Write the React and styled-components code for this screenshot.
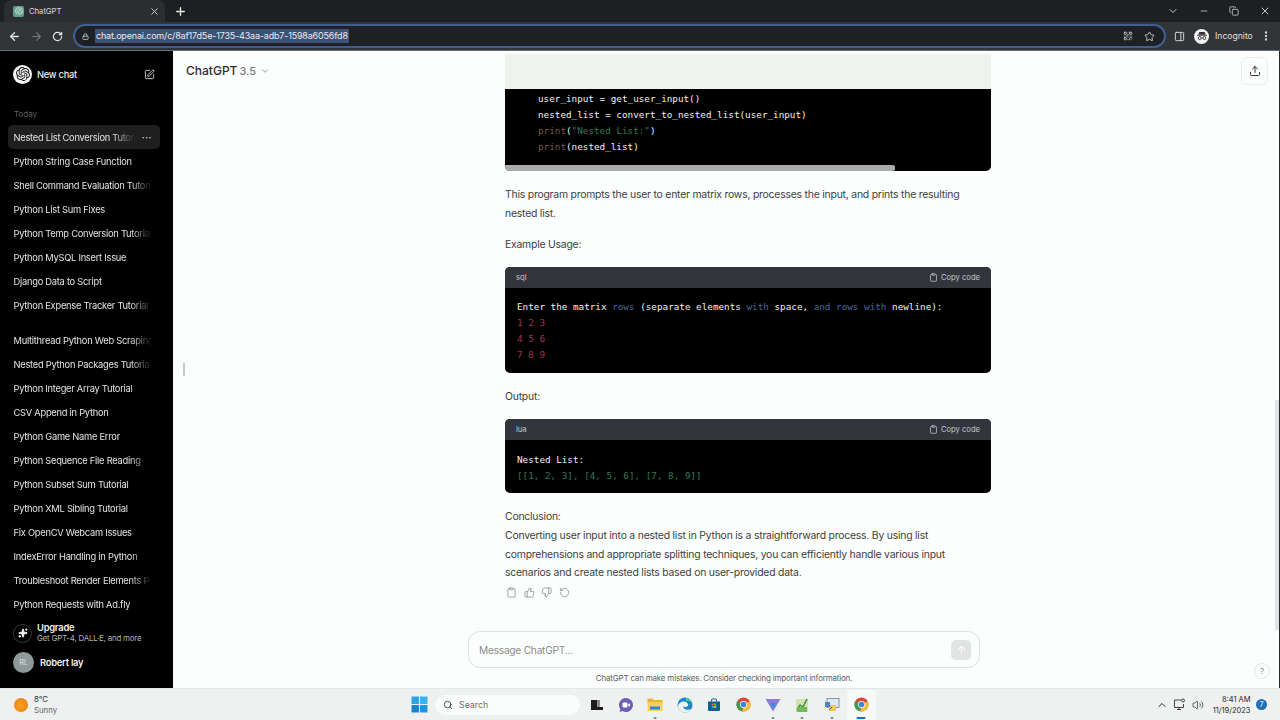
import React from "react";
import styled, { createGlobalStyle } from "styled-components";
import {
  ArrowLeft,
  ArrowRight,
  ArrowUp,
  ChevronDown,
  ChevronUp,
  Clipboard,
  Copy,
  EllipsisVertical,
  Lock,
  Minus,
  PanelRight,
  Plus,
  QrCode,
  RotateCcw,
  RotateCw,
  Search,
  Sparkles,
  SquarePen,
  Star,
  ThumbsDown,
  ThumbsUp,
  Upload,
  Volume2,
  X,
} from "lucide-react";
import { SiOpenai } from "react-icons/si";

const GlobalStyle = createGlobalStyle`
  html, body {
    margin: 0;
    padding: 0;
    width: 1280px;
    height: 720px;
    overflow: hidden;
    font-family: Inter, "Liberation Sans", sans-serif;
  }
  * { box-sizing: border-box; }
`;

const Page = styled.div`
  width: 1280px;
  height: 720px;
  display: flex;
  flex-direction: column;
  overflow: hidden;
`;

/* browser chrome */
const TabStrip = styled.div`
  height: 22px;
  flex: none;
  background: #1e1f21;
  display: flex;
  align-items: flex-end;
  padding-left: 4px;
  color: #d6d8da;
`;

const Tab = styled.div`
  width: 161px;
  height: 22px;
  background: #2c2d2f;
  border-radius: 7px 7px 0 0;
  display: flex;
  align-items: center;
  padding: 0 5px 0 9px;
  gap: 5px;
  font-size: 7.8px;
  letter-spacing: -0.1px;
`;

const TabTitle = styled.span`
  flex: 1;
`;

const Favicon = styled.span`
  width: 11px;
  height: 11px;
  border-radius: 2px;
  background: #5fa08d;
  color: #d8e8e2;
  display: flex;
  align-items: center;
  justify-content: center;
`;

const NewTab = styled.div`
  margin-left: 9px;
  height: 22px;
  display: flex;
  align-items: center;
  color: #eceded;
`;

const WindowControls = styled.div`
  margin-left: auto;
  height: 22px;
  display: flex;
  align-items: center;
  gap: 20px;
  padding-right: 9px;
  color: #c4c6c8;
`;

const Toolbar = styled.div`
  height: 29px;
  flex: none;
  background: #333438;
  border-bottom: 1px solid #5b6c86;
  display: flex;
  align-items: center;
  padding: 0 8px;
  color: #e4e5e6;
`;

const NavButtons = styled.div`
  display: flex;
  align-items: center;
  gap: 9px;
  width: 65px;
`;

const AddressBar = styled.div`
  width: 1093px;
  height: 24px;
  border: 2px solid #3f5f92;
  border-radius: 12px;
  background: #1f2023;
  display: flex;
  align-items: center;
  padding: 0 9px 0 7px;
  font-size: 9px;
  letter-spacing: -0.18px;
  color: #e8eaed;
`;

const Selected = styled.span`
  background: #3b5175;
  margin-left: 6px;
  line-height: 14px;
  padding: 0 1px;
`;

const AddressIcons = styled.div`
  margin-left: auto;
  display: flex;
  align-items: center;
  gap: 11px;
  color: #cfd1d3;
`;

const ProfileGroup = styled.div`
  margin-left: 8px;
  display: flex;
  align-items: center;
  flex: 1;
  font-size: 8.6px;
  color: #dfe0e1;
`;

const Profile = styled.div`
  display: flex;
  align-items: center;
  gap: 6px;
  margin-left: 9px;
`;

const Incognito = styled.span`
  width: 15px;
  height: 15px;
  border-radius: 50%;
  background: #f1f2f3;
  display: flex;
  align-items: center;
  justify-content: center;
`;

const MoreButton = styled.span`
  margin-left: auto;
  display: flex;
`;

/* app */
const AppBody = styled.div`
  flex: 1;
  min-height: 0;
  display: flex;
`;

const Sidebar = styled.aside`
  width: 173px;
  flex: none;
  background: #000;
  display: flex;
  flex-direction: column;
  color: #e3e3e3;
  font-size: 9.3px;
  letter-spacing: -0.25px;
  overflow: hidden;
`;

const NewChatRow = styled.div`
  height: 24px;
  margin: 11px 0 0;
  padding: 0 18px 0 13px;
  display: flex;
  align-items: center;
  gap: 5px;
  font-weight: 500;
  color: #ececec;
`;

const LogoBadge = styled.span`
  width: 19px;
  height: 19px;
  border-radius: 50%;
  background: #f6f6f6;
  color: #111;
  display: flex;
  align-items: center;
  justify-content: center;
`;

const NewChatIcon = styled.span`
  margin-left: auto;
  display: flex;
  color: #d4d4d4;
`;

const GroupLabel = styled.div`
  margin: 22px 0 0 14px;
  height: 12px;
  line-height: 12px;
  font-size: 8px;
  letter-spacing: 0;
  color: #5f5f5f;
`;

const ChatList = styled.div`
  margin: 5px 13px 0 8px;
  display: flex;
  flex-direction: column;
`;

const ChatItem = styled.div`
  height: 24px;
  flex: none;
  padding: 0 8px 0 5.5px;
  display: flex;
  align-items: center;
  border-radius: 5px;
  margin-top: ${({ $gapBefore }) => ($gapBefore ? "11px" : "0")};
  background: ${({ $active }) => ($active ? "#1f1f1f" : "transparent")};
`;

const ChatTitle = styled.span`
  flex: 1;
  min-width: 0;
  white-space: nowrap;
  overflow: hidden;
  mask-image: linear-gradient(to right, #000 calc(100% - 22px), transparent);
`;

const ItemDots = styled.span`
  flex: none;
  width: 17px;
  text-align: right;
  font-size: 5px;
  letter-spacing: 0.6px;
  color: #bdbdbd;
  line-height: 10px;
`;

const UpgradeRow = styled.div`
  margin: 5px 0 0 13px;
  height: 24px;
  display: flex;
  align-items: center;
  gap: 5px;
`;

const UpgradeBadge = styled.span`
  width: 19px;
  height: 19px;
  border-radius: 50%;
  border: 1px solid #3a3a3a;
  color: #fff;
  display: flex;
  align-items: center;
  justify-content: center;
`;

const UpgradeText = styled.div`
  display: flex;
  flex-direction: column;
  font-size: 9.4px;
  line-height: 10.5px;
  font-weight: 600;
  color: #efefef;
`;

const UpgradeNote = styled.span`
  font-size: 7.9px;
  font-weight: 400;
  letter-spacing: -0.2px;
  color: #b3b3b3;
`;

const UserRow = styled.div`
  margin: 7px 0 0 13px;
  display: flex;
  align-items: center;
  gap: 6px;
  font-weight: 600;
  font-size: 9.4px;
  color: #f0f0f0;
`;

const Avatar = styled.span`
  width: 21px;
  height: 21px;
  border-radius: 50%;
  background: #8d9a99;
  color: #d4dbda;
  font-size: 7.5px;
  font-weight: 400;
  display: flex;
  align-items: center;
  justify-content: center;
`;

const Main = styled.main`
  position: relative;
  flex: 1;
  min-width: 0;
  background: #fbfefc;
  display: flex;
  flex-direction: column;
  border-right: 1px solid #26282b;
`;

const ChatHeader = styled.header`
  position: absolute;
  top: 0;
  left: 0;
  right: 0;
  height: 39px;
  padding: 0 11px 0 13px;
  display: flex;
  align-items: center;
  justify-content: space-between;
`;

const ModelName = styled.div`
  display: flex;
  align-items: center;
  gap: 2px;
  font-size: 12px;
  font-weight: 500;
  color: #2d2d2d;
`;

const ModelVersion = styled.span`
  color: #7b7b7b;
  font-size: 11px;
  font-weight: 500;
  margin-right: 2px;
`;

const ShareButton = styled.div`
  width: 27px;
  height: 28px;
  margin-top: 1px;
  border: 1px solid #eceeed;
  border-radius: 6px;
  display: flex;
  align-items: center;
  justify-content: center;
  color: #333;
`;

const Thread = styled.div`
  flex: 1;
  min-height: 0;
  overflow: hidden;
  padding: 3px 0 0 332px;
`;

const Column = styled.div`
  width: 486px;
  display: flex;
  flex-direction: column;
`;

const Prose = styled.p`
  margin: ${({ $top }) => $top ?? 14}px 0 0;
  font-size: 10.4px;
  letter-spacing: -0.21px;
  line-height: 18.6px;
  color: #3c3e40;
`;

const CodeBlock = styled.div`
  margin-top: ${({ $top }) => $top ?? 13}px;
  border-radius: 5px;
  overflow: hidden;
  background: #000;
`;

const ScrolledBlock = styled(CodeBlock)`
  border-radius: 0 0 5px 5px;
`;

const FadedHead = styled.div`
  height: 35px;
  background: #f0f2ef;
`;

const CodeHead = styled.div`
  height: 21px;
  background: #33353c;
  color: #c4c6c9;
  font-size: 7.6px;
  display: flex;
  align-items: center;
  justify-content: space-between;
  padding: 0 11px;
`;

const CopyCode = styled.span`
  display: flex;
  align-items: center;
  gap: 3px;
`;

const Code = styled.pre`
  margin: 0;
  padding: ${({ $pad }) => $pad};
  font-family: "DejaVu Sans Mono", "Liberation Mono", monospace;
  font-size: 9.3px;
  line-height: 16px;
  color: #f2f2f2;
`;

const Tok = styled.span`
  color: ${({ $c }) => $c};
`;

const HScroll = styled.div`
  height: 6px;
  width: 390px;
  background: #a9abae;
  border-radius: 0 2px 2px 0;
  margin-top: 10px;
`;

const Actions = styled.div`
  margin-top: 4px;
  padding-left: 1px;
  display: flex;
  gap: 6.5px;
  color: #9b9d9d;
`;

const ComposerArea = styled.div`
  flex: none;
  height: 57px;
  padding-left: 295px;
`;

const Composer = styled.div`
  width: 512px;
  height: 37px;
  border: 1px solid #dcdfdd;
  border-radius: 12px;
  display: flex;
  align-items: center;
  justify-content: space-between;
  padding: 0 8px 0 10px;
  font-size: 10.2px;
  letter-spacing: -0.25px;
  color: #8b8d8c;
`;

const SendButton = styled.span`
  width: 20px;
  height: 20px;
  border-radius: 5px;
  background: #e2e4e3;
  color: #fafafa;
  display: flex;
  align-items: center;
  justify-content: center;
`;

const Disclaimer = styled.div`
  width: 512px;
  margin-top: 4px;
  text-align: center;
  font-size: 8px;
  letter-spacing: -0.2px;
  line-height: 12px;
  color: #5f6160;
`;

const HelpButton = styled.div`
  position: absolute;
  right: 9px;
  bottom: 9px;
  width: 16px;
  height: 16px;
  border-radius: 50%;
  border: 1px solid #e3e5e4;
  color: #8a8c8b;
  font-size: 8px;
  display: flex;
  align-items: center;
  justify-content: center;
`;

const ScrollThumb = styled.div`
  position: absolute;
  right: 0;
  top: 349px;
  bottom: 58px;
  width: 4px;
  background: #dfe3e6;
`;

const SidebarHandle = styled.div`
  position: absolute;
  left: 10px;
  top: 312px;
  width: 2px;
  height: 13px;
  background: #c9cbca;
`;

/* taskbar */
const Taskbar = styled.footer`
  height: 32px;
  flex: none;
  background: #eef1f0;
  border-top: 1px solid #e4e7e6;
  display: flex;
  align-items: center;
  color: #2a2a2a;
`;

const Weather = styled.div`
  width: 411px;
  padding-left: 14px;
  display: flex;
  align-items: center;
  gap: 6px;
  font-size: 7.8px;
  line-height: 10.5px;
`;

const Sun = styled.span`
  width: 14px;
  height: 14px;
  border-radius: 50%;
  background: radial-gradient(circle at 45% 55%, #f7a21d, #e67a16);
`;

const WeatherNote = styled.div`
  color: #666;
`;

const TaskIcons = styled.div`
  display: flex;
  align-items: center;
`;

const TaskSlot = styled.span`
  position: relative;
  width: 29.4px;
  height: 30px;
  display: flex;
  align-items: center;
  justify-content: center;
  background: ${({ $on }) => ($on ? "#f7f9f8" : "transparent")};
  border-radius: 4px;

  &::after {
    content: "";
    display: ${({ $dot }) => ($dot ? "block" : "none")};
    position: absolute;
    bottom: 1px;
    left: 50%;
    transform: translateX(-50%);
    width: ${({ $on }) => ($on ? "9px" : "3px")};
    height: 2px;
    border-radius: 1px;
    background: ${({ $on }) => ($on ? "#1c6fb4" : "#8a8a8a")};
  }
`;

const SearchPill = styled.div`
  width: 145px;
  height: 20px;
  margin: 0 2px 0 7px;
  border-radius: 10px;
  background: #fafbfb;
  display: flex;
  align-items: center;
  gap: 6px;
  padding-left: 8px;
  font-size: 8.8px;
  color: #707070;
`;

const Tray = styled.div`
  margin-left: auto;
  display: flex;
  align-items: center;
  gap: 5.5px;
  padding-right: 13px;
`;

const Clock = styled.div`
  margin-left: 3.5px;
  font-size: 7.5px;
  line-height: 11px;
  text-align: right;
`;

const Badge = styled.span`
  width: 11px;
  height: 11px;
  border-radius: 50%;
  background: #1f6fb9;
  color: #fff;
  font-size: 7px;
  display: flex;
  align-items: center;
  justify-content: center;
`;

const todayChats = [
  "Nested List Conversion Tutorial",
  "Python String Case Function",
  "Shell Command Evaluation Tutorial",
  "Python List Sum Fixes",
  "Python Temp Conversion Tutorial",
  "Python MySQL Insert Issue",
  "Django Data to Script",
  "Python Expense Tracker Tutorial",
];

const olderChats = [
  "Multithread Python Web Scraping",
  "Nested Python Packages Tutorial",
  "Python Integer Array Tutorial",
  "CSV Append in Python",
  "Python Game Name Error",
  "Python Sequence File Reading",
  "Python Subset Sum Tutorial",
  "Python XML Sibling Tutorial",
  "Fix OpenCV Webcam Issues",
  "IndexError Handling in Python",
  "Troubleshoot Render Elements Python",
  "Python Requests with Ad.fly",
];

const BLUE = "#44699f";
const RED = "#a03450";
const GREEN = "#2f7a58";
const BROWN = "#7d5a4c";

const WindowsLogo = () => (
  <svg width="17" height="17" viewBox="0 0 16 16">
    <rect x="0.5" y="0.5" width="7" height="7" fill="#2aa3e2" />
    <rect x="8.5" y="0.5" width="7" height="7" fill="#39b2ec" />
    <rect x="0.5" y="8.5" width="7" height="7" fill="#1685cf" />
    <rect x="8.5" y="8.5" width="7" height="7" fill="#1f95da" />
  </svg>
);

const ChromeLogo = () => (
  <svg width="15" height="15" viewBox="0 0 16 16">
    <circle cx="8" cy="8" r="7.5" fill="#d8483b" />
    <path d="M8 8 L1.5 4.2 A7.5 7.5 0 0 0 6.8 15.4 Z" fill="#3d9c53" />
    <path d="M8 8 L6.8 15.4 A7.5 7.5 0 0 0 14.6 4.4 Z" fill="#efc13c" />
    <circle cx="8" cy="8" r="3.7" fill="#f4f5f5" />
    <circle cx="8" cy="8" r="2.9" fill="#3f83d8" />
  </svg>
);

const TaskView = () => (
  <svg width="14" height="14" viewBox="0 0 14 14">
    <rect x="1" y="2" width="9" height="10" fill="#8e8e8e" />
    <path d="M1 2h6v7h6v3H1z" fill="#1c1c1c" />
  </svg>
);

const TeamsChat = () => (
  <svg width="16" height="16" viewBox="0 0 16 16">
    <path d="M8 1a7 7 0 1 1-3.6 13L1.5 15l.9-2.8A7 7 0 0 1 8 1z" fill="#6d5fb5" />
    <rect x="4.5" y="5.5" width="5" height="5" rx="1" fill="#fff" />
    <path d="M10 7.5l2-1.2v3.4l-2-1.2z" fill="#fff" />
  </svg>
);

const FolderIcon = () => (
  <svg width="16" height="15" viewBox="0 0 16 15">
    <path d="M0.5 1.5h5l1.5 1.5h8.5v3H0.5z" fill="#e8b53a" />
    <rect x="0.5" y="5" width="15" height="9" fill="#f4cf5e" />
    <rect x="3" y="9.5" width="10" height="3" fill="#2a8bd0" />
  </svg>
);

const EdgeIcon = () => (
  <svg width="16" height="16" viewBox="0 0 16 16">
    <circle cx="8" cy="8" r="7.5" fill="#1b86c9" />
    <path d="M1 9c1-5 8-6 10-2 1 2-1 3-3 3-1.500 0-2-1-2-1 0 3 4 5 8 3-1.500 2.500-3.500 3.500-6 3.500-4 0-7-3-7-6.500z" fill="#ecf5f2" />
    <path d="M9 1c3 0 6 2.500 6.500 6-1-2-3-3.500-6.500-3z" fill="#57c98a" />
  </svg>
);

const StoreIcon = () => (
  <svg width="14" height="14" viewBox="0 0 14 14">
    <path d="M1 3.500h12V12a1 1 0 0 1-1 1H2a1 1 0 0 1-1-1z" fill="#0f5f91" />
    <path d="M4.500 3.500V2a1 1 0 0 1 1-1h3a1 1 0 0 1 1 1v1.500" stroke="#0f5f91" fill="none" />
    <rect x="4.800" y="5.500" width="2" height="2" fill="#e8683a" />
    <rect x="7.200" y="5.500" width="2" height="2" fill="#7fba3a" />
    <rect x="4.800" y="8" width="2" height="2" fill="#35a4e6" />
    <rect x="7.200" y="8" width="2" height="2" fill="#f0bb35" />
  </svg>
);

const VpnIcon = () => (
  <svg width="16" height="14" viewBox="0 0 16 14">
    <path d="M0.500 1h15L8 13.500z" fill="#8d7bdc" />
    <path d="M4.500 5h7L8 11z" fill="#3f8fda" />
  </svg>
);

const ChartAppIcon = () => (
  <svg width="14" height="16" viewBox="0 0 14 16">
    <rect x="1" y="2" width="12" height="13" fill="#cfe2b0" />
    <path d="M2 13l3-5 3 2 4-8" stroke="#3c8f45" strokeWidth="1.500" fill="none" />
    <rect x="2" y="10" width="10" height="5" fill="#74b85b" />
  </svg>
);

const RemoteIcon = () => (
  <svg width="16" height="16" viewBox="0 0 16 16">
    <rect x="3" y="1.500" width="12" height="9" fill="#dfe8ef" stroke="#6f8292" strokeWidth="0.800" />
    <rect x="5" y="8" width="7" height="6" fill="#f2c94c" />
    <path d="M1 5h5v5H1z" fill="#4b87b8" />
    <path d="M5 13l3-3" stroke="#2f6e9e" />
  </svg>
);

const DisplayIcon = () => (
  <svg width="13" height="13" viewBox="0 0 13 13" fill="none" stroke="#333" strokeWidth="0.900">
    <path d="M8 2H1.500v7.500h9V6" />
    <path d="M4 11.500h4M6 9.500v2" />
    <circle cx="10" cy="2.500" r="1.500" />
  </svg>
);

const IncognitoGlyph = () => (
  <svg width="12" height="12" viewBox="0 0 12 12" fill="#333">
    <path d="M3.200 2h5.600l.8 2.800H2.400z" />
    <rect x="1" y="4.800" width="10" height="0.900" />
    <circle cx="3.700" cy="8" r="1.500" fill="none" stroke="#333" strokeWidth="0.900" />
    <circle cx="8.300" cy="8" r="1.500" fill="none" stroke="#333" strokeWidth="0.900" />
    <rect x="5.200" y="7.600" width="1.600" height="0.700" />
  </svg>
);

export default function App() {
  return (
    <Page>
      <GlobalStyle />
      <TabStrip>
        <Tab>
          <Favicon>
            <SiOpenai size={8} />
          </Favicon>
          <TabTitle>ChatGPT</TabTitle>
          <X size={11} />
        </Tab>
        <NewTab>
          <Plus size={13} strokeWidth={2.4} />
        </NewTab>
        <WindowControls>
          <ChevronDown size={12} />
          <Minus size={10} />
          <Copy size={10} />
          <X size={12} />
        </WindowControls>
      </TabStrip>
      <Toolbar>
        <NavButtons>
          <ArrowLeft size={13} strokeWidth={2.4} />
          <ArrowRight size={13} strokeWidth={2} color="#77797c" />
          <RotateCw size={11} strokeWidth={2.6} />
        </NavButtons>
        <AddressBar>
          <Lock size={7} strokeWidth={3} color="#b8babc" />
          <Selected>chat.openai.com/c/8af17d5e-1735-43aa-adb7-1598a6056fd8</Selected>
          <AddressIcons>
            <QrCode size={10} />
            <Star size={11} />
          </AddressIcons>
        </AddressBar>
        <ProfileGroup>
          <PanelRight size={11} />
          <Profile>
            <Incognito>
              <IncognitoGlyph />
            </Incognito>
            Incognito
          </Profile>
          <MoreButton>
            <EllipsisVertical size={12} strokeWidth={2.6} />
          </MoreButton>
        </ProfileGroup>
      </Toolbar>
      <AppBody>
        <Sidebar>
          <NewChatRow>
            <LogoBadge>
              <SiOpenai size={14} />
            </LogoBadge>
            New chat
            <NewChatIcon>
              <SquarePen size={11} />
            </NewChatIcon>
          </NewChatRow>
          <GroupLabel>Today</GroupLabel>
          <ChatList>
            {todayChats.map((title, i) => (
              <ChatItem key={title} $active={i === 0}>
                <ChatTitle>{title}</ChatTitle>
                {i === 0 && <ItemDots>•••</ItemDots>}
              </ChatItem>
            ))}
            {olderChats.map((title, i) => (
              <ChatItem key={title} $gapBefore={i === 0}>
                <ChatTitle>{title}</ChatTitle>
              </ChatItem>
            ))}
          </ChatList>
          <UpgradeRow>
            <UpgradeBadge>
              <Sparkles size={10} fill="#fff" />
            </UpgradeBadge>
            <UpgradeText>
              Upgrade
              <UpgradeNote>Get GPT-4, DALL·E, and more</UpgradeNote>
            </UpgradeText>
          </UpgradeRow>
          <UserRow>
            <Avatar>RL</Avatar>
            Robert lay
          </UserRow>
        </Sidebar>
        <Main>
          <Thread>
            <Column>
              <FadedHead />
              <ScrolledBlock $top={0}>
                <Code $pad="2px 0 0 33px">
                  {"user_input = get_user_input()\nnested_list = convert_to_nested_list(user_input)\n"}
                  <Tok $c={BROWN}>print</Tok>(<Tok $c={GREEN}>"Nested List:"</Tok>)
                  {"\n"}
                  <Tok $c={BROWN}>print</Tok>(nested_list)
                </Code>
                <HScroll />
              </ScrolledBlock>
              <Prose $top={15}>
                This program prompts the user to enter matrix rows, processes the input, and prints the
                resulting nested list.
              </Prose>
              <Prose $top={13}>Example Usage:</Prose>
              <CodeBlock $top={12}>
                <CodeHead>
                  sql
                  <CopyCode>
                    <Clipboard size={9} />
                    Copy code
                  </CopyCode>
                </CodeHead>
                <Code $pad="11px 12px 10px">
                  {"Enter the matrix "}
                  <Tok $c={BLUE}>rows</Tok>
                  {" (separate elements "}
                  <Tok $c={BLUE}>with</Tok>
                  {" space, "}
                  <Tok $c={BLUE}>and</Tok> <Tok $c={BLUE}>rows</Tok> <Tok $c={BLUE}>with</Tok>
                  {" newline):\n"}
                  <Tok $c={RED}>{"1 2 3\n4 5 6\n7 8 9"}</Tok>
                </Code>
              </CodeBlock>
              <Prose $top={15}>Output:</Prose>
              <CodeBlock>
                <CodeHead>
                  lua
                  <CopyCode>
                    <Clipboard size={9} />
                    Copy code
                  </CopyCode>
                </CodeHead>
                <Code $pad="12px 12px 9px">
                  {"Nested List:\n"}
                  <Tok $c={GREEN}>[[1, 2, 3], [4, 5, 6], [7, 8, 9]]</Tok>
                </Code>
              </CodeBlock>
              <Prose $top={15}>
                Conclusion:
                <br />
                Converting user input into a nested list in Python is a straightforward process. By using
                list comprehensions and appropriate splitting techniques, you can efficiently handle
                various input scenarios and create nested lists based on user-provided data.
              </Prose>
              <Actions>
                <Clipboard size={11} />
                <ThumbsUp size={11} />
                <ThumbsDown size={11} />
                <RotateCcw size={11} />
              </Actions>
            </Column>
          </Thread>
          <ComposerArea>
            <Composer>
              Message ChatGPT...
              <SendButton>
                <ArrowUp size={11} strokeWidth={2.6} />
              </SendButton>
            </Composer>
            <Disclaimer>ChatGPT can make mistakes. Consider checking important information.</Disclaimer>
          </ComposerArea>
          <ChatHeader>
            <ModelName>
              ChatGPT <ModelVersion>3.5</ModelVersion>
              <ChevronDown size={10} color="#8a8a8a" />
            </ModelName>
            <ShareButton>
              <Upload size={12} />
            </ShareButton>
          </ChatHeader>
          <SidebarHandle />
          <ScrollThumb />
          <HelpButton>?</HelpButton>
        </Main>
      </AppBody>
      <Taskbar>
        <Weather>
          <Sun />
          <div>
            8°C
            <WeatherNote>Sunny</WeatherNote>
          </div>
        </Weather>
        <TaskIcons>
          <WindowsLogo />
          <SearchPill>
            <Search size={10} color="#333" />
            Search
          </SearchPill>
          <TaskSlot><TaskView /></TaskSlot>
          <TaskSlot><TeamsChat /></TaskSlot>
          <TaskSlot $dot><FolderIcon /></TaskSlot>
          <TaskSlot><EdgeIcon /></TaskSlot>
          <TaskSlot><StoreIcon /></TaskSlot>
          <TaskSlot><ChromeLogo /></TaskSlot>
          <TaskSlot $dot><VpnIcon /></TaskSlot>
          <TaskSlot $dot><ChartAppIcon /></TaskSlot>
          <TaskSlot $dot><RemoteIcon /></TaskSlot>
          <TaskSlot $dot $on><ChromeLogo /></TaskSlot>
        </TaskIcons>
        <Tray>
          <ChevronUp size={12} />
          <DisplayIcon />
          <Volume2 size={12} strokeWidth={1.4} />
          <Clock>
            8:41 AM
            <br />
            11/19/2023
          </Clock>
          <Badge>7</Badge>
        </Tray>
      </Taskbar>
    </Page>
  );
}
